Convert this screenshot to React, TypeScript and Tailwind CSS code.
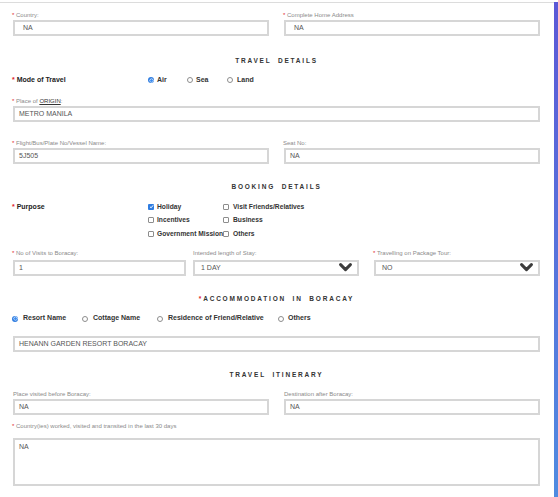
import type { ReactNode } from "react";

function Req() {
  return <span className="text-[#e0262c]">* </span>;
}

function Label({ req, children, className = "" }: { req?: boolean; children: ReactNode; className?: string }) {
  return (
    <div className={`h-[7px] text-[6px] leading-[7px] text-[#8a8a8a] whitespace-nowrap ${className}`}>
      {req && <Req />}
      {children}
    </div>
  );
}

function Box({ value, pad = "px-[4px]" }: { value: string; pad?: string }) {
  return (
    <div className={`h-[16px] border-2 border-[#d6d6d6] bg-white ${pad} text-[7px] leading-[12px] text-[#555]`}>
      {value}
    </div>
  );
}

function SelectBox({ value }: { value: string }) {
  return (
    <div className="flex h-[16px] items-center justify-between border-2 border-[#d6d6d6] bg-white pl-[6px] pr-[5px] text-[7px] leading-[12px] text-[#555]">
      <span>{value}</span>
      <svg width="13" height="9" viewBox="0 0 13 9">
        <polyline points="1.6,1.6 6.5,6.6 11.4,1.6" fill="none" stroke="#3c3c3c" strokeWidth="3" strokeLinecap="round" strokeLinejoin="round" />
      </svg>
    </div>
  );
}

function Heading({ children }: { children: ReactNode }) {
  return (
    <div className="h-[8px] text-center text-[6.5px] font-bold leading-[8px] tracking-[1.8px] text-[#333] [word-spacing:3px]">
      {children}
    </div>
  );
}

function Radio({ checked }: { checked?: boolean }) {
  return checked ? (
    <span className="flex h-[6px] w-[6px] shrink-0 items-center justify-center rounded-full bg-[#2f7de1]">
      <span className="h-[3px] w-[3px] rounded-full bg-[#3b8cf0] ring-[0.5px] ring-white" />
    </span>
  ) : (
    <span className="h-[6px] w-[6px] shrink-0 rounded-full border border-[#8d8d8d] bg-white" />
  );
}

function Check({ checked }: { checked?: boolean }) {
  return checked ? (
    <span className="flex h-[6px] w-[6px] shrink-0 items-center justify-center rounded-[1px] bg-[#2f7de1]">
      <svg width="5" height="5" viewBox="0 0 10 10">
        <polyline points="2,5.5 4.2,7.6 8.2,2.6" fill="none" stroke="#fff" strokeWidth="2" />
      </svg>
    </span>
  ) : (
    <span className="h-[6px] w-[6px] shrink-0 rounded-[1px] border border-[#8d8d8d] bg-white" />
  );
}

function Option({ label, checked, box, w, gap = "gap-[3px]" }: { label: string; checked?: boolean; box?: boolean; w: string; gap?: string }) {
  return (
    <div className={`flex items-center ${gap} ${w} ${box ? "text-[6.7px]" : "text-[7px]"} font-bold text-[#333] whitespace-nowrap`}>
      {box ? <Check checked={checked} /> : <Radio checked={checked} />}
      <span>{label}</span>
    </div>
  );
}

export default function App() {
  return (
    <div className="flex min-h-[497px] w-[558px] bg-white pt-[2px] font-['Liberation_Sans',Arial,sans-serif]">
      <div className="flex-1 border-t border-[#dcdcdc] pl-[13px] pr-[14px] pb-[8px]">
        {/* home */}
        <div className="mt-[9px] grid grid-cols-2 gap-x-[15px]">
          <div>
            <Label req className="mb-[1px] -ml-[1px]">Country:</Label>
            <Box value="NA" pad="px-[8px]" />
          </div>
          <div>
            <Label req className="mb-[1px] -ml-[1px]">Complete Home Address</Label>
            <Box value="NA" pad="px-[8px]" />
          </div>
        </div>

        {/* travel */}
        <div className="mt-[21px]">
          <Heading>TRAVEL DETAILS</Heading>
        </div>
        <div className="mt-[10px] flex h-[10px] items-center">
          <div className="-ml-[1px] w-[136px] text-[7px] font-bold text-[#222]">
            <Req />
            Mode of Travel
          </div>
          <Option label="Air" checked w="w-[39px]" />
          <Option label="Sea" w="w-[40px]" />
          <Option label="Land" w="w-[40px]" gap="gap-[4px]" />
        </div>
        <div className="mt-[13px]">
          <Label req className="mb-[1px] -ml-[1px]">
            Place of <span className="text-[#333] underline">ORIGIN</span>:
          </Label>
          <Box value="METRO MANILA" />
        </div>
        <div className="mt-[18px] grid grid-cols-2 gap-x-[15px]">
          <div>
            <Label req className="mb-[1px] -ml-[1px]">Flight/Bus/Plate No/Vessel Name:</Label>
            <Box value="5J505" />
          </div>
          <div>
            <Label className="mb-[1px] -ml-[1px]">Seat No:</Label>
            <Box value="NA" />
          </div>
        </div>

        {/* booking */}
        <div className="mt-[19px]">
          <Heading>BOOKING DETAILS</Heading>
        </div>
        <div className="mt-[9px] flex">
          <div className="-ml-[1px] flex h-[13.5px] w-[136px] items-center text-[7px] font-bold text-[#222]">
            <span>
              <Req />
              Purpose
            </span>
          </div>
          <div className="grid grid-cols-[75px_auto] auto-rows-[13.5px] items-center">
            <Option label="Holiday" checked box w="" gap="gap-[3px]" />
            <Option label="Visit Friends/Relatives" box w="" gap="gap-[4px]" />
            <Option label="Incentives" box w="" gap="gap-[3px]" />
            <Option label="Business" box w="" gap="gap-[4px]" />
            <Option label="Government Mission" box w="" gap="gap-[3px]" />
            <Option label="Others" box w="" gap="gap-[4px]" />
          </div>
        </div>
        <div className="mt-[9px] flex">
          <div className="w-[173px]">
            <Label req className="mb-[3px] -ml-[1px]">No of Visits to Boracay:</Label>
            <Box value="1" />
          </div>
          <div className="ml-[7px] w-[166px]">
            <Label className="mb-[3px]">Intended length of Stay:</Label>
            <SelectBox value="1 DAY" />
          </div>
          <div className="ml-[15px] w-[166px]">
            <Label req className="mb-[3px] -ml-[1px]">Travelling on Package Tour:</Label>
            <SelectBox value="NO" />
          </div>
        </div>

        {/* accommodation */}
        <div className="mt-[19px]">
          <Heading>
            <span className="text-[#e0262c]">*</span>ACCOMMODATION IN BORACAY
          </Heading>
        </div>
        <div className="mt-[11px] -ml-[1px] flex h-[10px] items-center">
          <Option label="Resort Name" checked w="w-[70px]" gap="gap-[5px]" />
          <Option label="Cottage Name" w="w-[75px]" gap="gap-[5px]" />
          <Option label="Residence of Friend/Relative" w="w-[121px]" gap="gap-[5px]" />
          <Option label="Others" w="" gap="gap-[4px]" />
        </div>
        <div className="mt-[12px]">
          <Box value="HENANN GARDEN RESORT BORACAY" />
        </div>

        {/* itinerary */}
        <div className="mt-[19px]">
          <Heading>TRAVEL ITINERARY</Heading>
        </div>
        <div className="mt-[12px] grid grid-cols-2 gap-x-[15px]">
          <div>
            <Label className="mb-[1px]">Place visited before Boracay:</Label>
            <Box value="NA" />
          </div>
          <div>
            <Label className="mb-[1px]">Destination after Boracay:</Label>
            <Box value="NA" />
          </div>
        </div>
        <div className="mt-[8px]">
          <Label req className="mb-[8px] -ml-[1px]">Country(ies) worked, visited and transited in the last 30 days</Label>
          <div className="h-[48px] border-2 border-[#d6d6d6] bg-white px-[4px] pt-[2px] text-[7px] leading-[10px] text-[#555]">
            NA
          </div>
        </div>
      </div>
      <div className="w-[4px] shrink-0 bg-gradient-to-b from-[#5b58d6] to-[#4f8be0]" />
    </div>
  );
}
